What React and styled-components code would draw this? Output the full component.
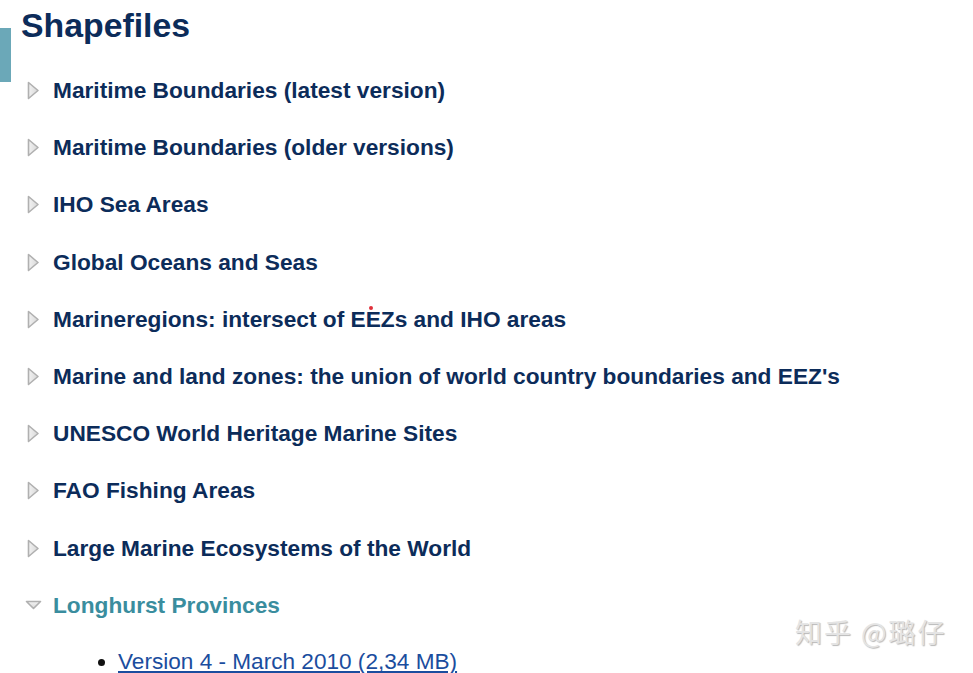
import React from "react";
import styled, { createGlobalStyle } from "styled-components";

const Global = createGlobalStyle`
  html, body { margin: 0; padding: 0; background: #ffffff; }
  body { font-family: Arial, "Liberation Sans", sans-serif; overflow: hidden; }
`;

const Page = styled.div`
  display: flex;
  width: 973px;
  height: 673px;
  position: relative;
  overflow: hidden;
`;

const Strip = styled.div`
  width: 11px;
  flex: none;
  padding-top: 28px;
`;

const StripBar = styled.div`
  width: 11px;
  height: 54px;
  background: #6ba8b8;
`;

const Content = styled.div`
  flex: 1;
  padding-left: 10px;
`;

const Title = styled.h2`
  margin: 0;
  height: 62px;
  font-size: 33.8px;
  line-height: 51px;
  font-weight: bold;
  color: #0c2c5a;
`;

const List = styled.ul`
  margin: 0;
  padding: 0;
  list-style: none;
`;

const Row = styled.li`
  display: flex;
  align-items: center;
  height: 57.2px;
`;

const Toggle = styled.span`
  width: 32px;
  flex: none;
  display: flex;
  align-items: center;
  padding-left: ${(p) => (p.$open ? "4px" : "6px")};
  box-sizing: border-box;
`;

const Label = styled.span`
  font-size: 22.7px;
  font-weight: bold;
  color: ${(p) => (p.$open ? "#3a8d9e" : "#0c2c5a")};
  white-space: nowrap;
`;

const SubList = styled.ul`
  margin: 0;
  padding: 0 0 0 77px;
  list-style: none;
`;

const SubItem = styled.li`
  display: flex;
  align-items: center;
  height: 57.2px;
  font-size: 22.6px;
`;

const Bullet = styled.span`
  width: 7px;
  height: 7px;
  border-radius: 50%;
  background: #111;
  margin-right: 13px;
  flex: none;
`;

const Link = styled.a`
  color: #1b4d9e;
  text-decoration: underline;
  text-underline-offset: 2px;
  white-space: nowrap;
`;

const Watermark = styled.div`
  position: absolute;
  left: 795px;
  top: 612px;
  font-family: "Noto Sans CJK SC", sans-serif;
  font-size: 27px;
  color: #e4e4e4;
  text-shadow: 1px 1px 1px #b8b8b8;
  letter-spacing: 2px;
  white-space: nowrap;
`;

const Dot = styled.span`
  position: absolute;
  left: 369px;
  top: 306px;
  width: 4px;
  height: 4px;
  border-radius: 50%;
  background: #e0303a;
`;

const RightArrow = () => (
  <svg width="13" height="19" viewBox="0 0 13 19">
    <defs>
      <linearGradient id="ra" x1="0" y1="0" x2="1" y2="0">
        <stop offset="0" stopColor="#f2f2f2" />
        <stop offset="1" stopColor="#d8d8d8" />
      </linearGradient>
    </defs>
    <path d="M1.5 1.5 L11 9.5 L1.5 17.5 Z" fill="url(#ra)" stroke="#b0b0b0" strokeWidth="1.6" strokeLinejoin="round" />
  </svg>
);

const DownArrow = () => (
  <svg width="17" height="10" viewBox="0 0 17 10">
    <defs>
      <linearGradient id="da" x1="0" y1="0" x2="0" y2="1">
        <stop offset="0" stopColor="#f2f2f2" />
        <stop offset="1" stopColor="#d8d8d8" />
      </linearGradient>
    </defs>
    <path d="M1.5 1.5 L15.5 1.5 L8.5 8.5 Z" fill="url(#da)" stroke="#b0b0b0" strokeWidth="1.6" strokeLinejoin="round" />
  </svg>
);

const items = [
  "Maritime Boundaries (latest version)",
  "Maritime Boundaries (older versions)",
  "IHO Sea Areas",
  "Global Oceans and Seas",
  "Marineregions: intersect of EEZs and IHO areas",
  "Marine and land zones: the union of world country boundaries and EEZ's",
  "UNESCO World Heritage Marine Sites",
  "FAO Fishing Areas",
  "Large Marine Ecosystems of the World",
];

export default function App() {
  return (
    <>
      <Global />
      <Page>
        <Strip>
          <StripBar />
        </Strip>
        <Content>
          <Title>Shapefiles</Title>
          <List>
            {items.map((t) => (
              <Row key={t}>
                <Toggle>
                  <RightArrow />
                </Toggle>
                <Label>{t}</Label>
              </Row>
            ))}
            <Row>
              <Toggle $open>
                <DownArrow />
              </Toggle>
              <Label $open>Longhurst Provinces</Label>
            </Row>
          </List>
          <SubList>
            <SubItem>
              <Bullet />
              <Link href="#">Version 4 - March 2010 (2,34 MB)</Link>
            </SubItem>
          </SubList>
        </Content>
        <Dot />
        <Watermark>知乎 @璐仔</Watermark>
      </Page>
    </>
  );
}
